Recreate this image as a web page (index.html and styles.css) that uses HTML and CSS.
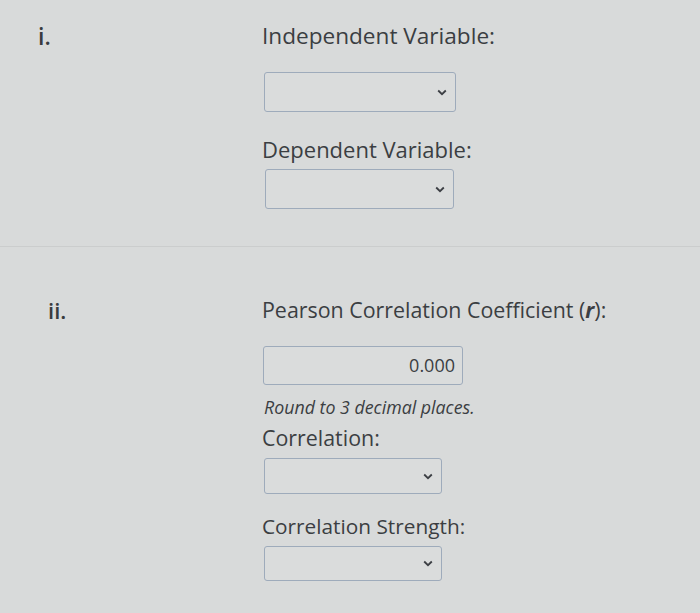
FILE: index.html
```html
<!DOCTYPE html>
<html>
<head>
<meta charset="utf-8">
<link rel="stylesheet" href="styles.css">
</head>
<body>
<main class="page">
  <section class="question q1">
    <div class="num">i.</div>
    <div class="fields">
      <div class="label first lg">Independent Variable:</div>
      <div class="select s1">
        <svg class="chev" width="10" height="7" viewBox="0 0 10 7"><path d="M1.2 1.5 L5 5.2 L8.8 1.5" fill="none" stroke="#3c3f44" stroke-width="1.8"/></svg>
      </div>
      <div class="label tight md">Dependent Variable:</div>
      <div class="select s2">
        <svg class="chev" width="10" height="7" viewBox="0 0 10 7"><path d="M1.2 1.5 L5 5.2 L8.8 1.5" fill="none" stroke="#3c3f44" stroke-width="1.8"/></svg>
      </div>
    </div>
  </section>
  <section class="question q2">
    <div class="num">ii.</div>
    <div class="fields">
      <div class="label first sm">Pearson Correlation Coefficient (<i>r</i>):</div>
      <div class="input">0.000</div>
      <div class="hint">Round to 3 decimal places.</div>
      <div class="label tight sm">Correlation:</div>
      <div class="select s3">
        <svg class="chev" width="10" height="7" viewBox="0 0 10 7"><path d="M1.2 1.5 L5 5.2 L8.8 1.5" fill="none" stroke="#3c3f44" stroke-width="1.8"/></svg>
      </div>
      <div class="label tight gap xs">Correlation Strength:</div>
      <div class="select s4">
        <svg class="chev" width="10" height="7" viewBox="0 0 10 7"><path d="M1.2 1.5 L5 5.2 L8.8 1.5" fill="none" stroke="#3c3f44" stroke-width="1.8"/></svg>
      </div>
    </div>
  </section>
</main>
</body>
</html>
```
FILE: styles.css
```css
html, body {
  margin: 0;
  padding: 0;
}
body {
  background: #d8dada;
  font-family: "Open Sans", "Noto Sans", sans-serif;
  color: #3b3e42;
  width: 700px;
  height: 613px;
  overflow: hidden;
}
.page {
  display: flex;
  flex-direction: column;
}
.question {
  display: flex;
}
.q1 {
  padding-top: 20px;
  height: 247px;
  box-sizing: border-box;
  border-bottom: 1px solid #cbcdcd;
}
.q2 {
  padding-top: 47px;
}
.num {
  width: 262px;
  box-sizing: border-box;
  padding-left: 38px;
  font-size: 23px;
  line-height: 32px;
  font-weight: 600;
  color: #383b3f;
}
.q2 .num {
  padding-left: 48px;
  font-size: 22px;
}
.fields {
  display: flex;
  flex-direction: column;
  align-items: flex-start;
}
.label {
  font-size: 22px;
  line-height: 32px;
}
.label.lg { font-size: 22.6px; }
.label.md { font-size: 22px; }
.label.sm { font-size: 21.4px; }
.label.xs { font-size: 20.8px; }
.label i {
  font-style: italic;
  font-weight: 700;
}
.label.first {
  margin-bottom: 18px;
}
.q1 .label.first {
  margin-bottom: 20px;
}
.label.tight {
  margin-bottom: 4px;
}
.label.gap {
  margin-top: 16px;
  margin-bottom: 4px;
}
.select {
  box-sizing: border-box;
  height: 40px;
  border: 1.5px solid #9eabbb;
  border-radius: 3px;
  background: #dadcdc;
  display: flex;
  align-items: center;
  justify-content: flex-end;
  padding-right: 8px;
  margin-left: 2px;
}
.s1 { width: 192px; margin-bottom: 21px; }
.s2 { width: 189px; margin-left: 3px; }
.s3 { width: 178px; height: 36px; margin-left: 2px; }
.s4 { width: 178px; height: 35px; margin-left: 2px; }
.input {
  box-sizing: border-box;
  width: 200px;
  height: 39px;
  border: 1.5px solid #9eabbb;
  border-radius: 3px;
  background: #dadcdc;
  margin-left: 1px;
  font-size: 18px;
  line-height: 36px;
  text-align: right;
  padding-right: 7px;
  margin-top: 2px;
  margin-bottom: 10px;
}
.hint {
  font-size: 17.8px;
  line-height: 24px;
  font-style: italic;
  margin-left: 2px;
  margin-bottom: 3px;
}
```
